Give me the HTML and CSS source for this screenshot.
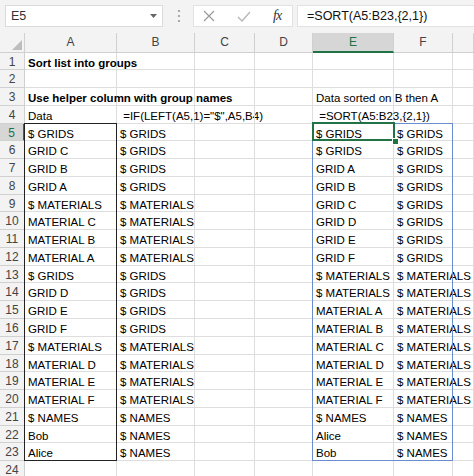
FILE: index.html
```html
<!doctype html>
<html lang="en">
<head>
  <meta charset="utf-8">
  <title>Sort list into groups</title>
  <link rel="stylesheet" href="styles.css">
</head>
<body>
  <div class="formula-bar">
    <div class="name-box">
      <span>E5</span>
      <svg class="caret" width="7" height="4" viewBox="0 0 7 4"><polygon points="0,0 7,0 3.5,4" fill="#666"/></svg>
    </div>
    <svg class="grip" width="4" height="14" viewBox="0 0 4 14">
      <circle cx="2" cy="2" r="1.1" fill="#999"/>
      <circle cx="2" cy="7" r="1.1" fill="#999"/>
      <circle cx="2" cy="12" r="1.1" fill="#999"/>
    </svg>
    <div class="fx-box">
      <svg width="12" height="12" viewBox="0 0 12 12"><path d="M1 1 L11 11 M11 1 L1 11" stroke="#9a9a9a" stroke-width="1.2" fill="none"/></svg>
      <svg width="14" height="11" viewBox="0 0 14 11"><path d="M1 6 L5 10 L13 1" stroke="#b5b5b5" stroke-width="1.3" fill="none"/></svg>
      <span class="fx">fx</span>
    </div>
    <div class="formula">=SORT(A5:B23,{2,1})</div>
  </div>

  <div class="sheet">
    <!-- column headers -->
    <div class="corner"><svg width="10" height="10" viewBox="0 0 10 10"><polygon points="10,0 10,10 0,10" fill="#bdbdbd"/></svg></div>
    <div class="ch">A</div><div class="ch">B</div><div class="ch">C</div><div class="ch">D</div>
    <div class="ch sel">E</div><div class="ch">F</div><div class="ch"></div>

    <div class="rh">1</div><div class="c b">Sort list into groups</div><div class="c"></div><div class="c"></div><div class="c"></div><div class="c"></div><div class="c"></div><div class="c"></div>
    <div class="rh">2</div><div class="c"></div><div class="c"></div><div class="c"></div><div class="c"></div><div class="c"></div><div class="c"></div><div class="c"></div>
    <div class="rh">3</div><div class="c b">Use helper column with group names</div><div class="c"></div><div class="c"></div><div class="c"></div><div class="c">Data sorted on B then A</div><div class="c"></div><div class="c"></div>
    <div class="rh">4</div><div class="c">Data</div><div class="c">&nbsp;=IF(LEFT(A5,1)="$",A5,B4)</div><div class="c"></div><div class="c"></div><div class="c">&nbsp;=SORT(A5:B23,{2,1})</div><div class="c"></div><div class="c"></div>
    <div class="rh sel">5</div><div class="c">$ GRIDS</div><div class="c">$ GRIDS</div><div class="c"></div><div class="c"></div><div class="c">$ GRIDS</div><div class="c">$ GRIDS</div><div class="c"></div>
    <div class="rh">6</div><div class="c">GRID C</div><div class="c">$ GRIDS</div><div class="c"></div><div class="c"></div><div class="c">$ GRIDS</div><div class="c">$ GRIDS</div><div class="c"></div>
    <div class="rh">7</div><div class="c">GRID B</div><div class="c">$ GRIDS</div><div class="c"></div><div class="c"></div><div class="c">GRID A</div><div class="c">$ GRIDS</div><div class="c"></div>
    <div class="rh">8</div><div class="c">GRID A</div><div class="c">$ GRIDS</div><div class="c"></div><div class="c"></div><div class="c">GRID B</div><div class="c">$ GRIDS</div><div class="c"></div>
    <div class="rh">9</div><div class="c">$ MATERIALS</div><div class="c">$ MATERIALS</div><div class="c"></div><div class="c"></div><div class="c">GRID C</div><div class="c">$ GRIDS</div><div class="c"></div>
    <div class="rh">10</div><div class="c">MATERIAL C</div><div class="c">$ MATERIALS</div><div class="c"></div><div class="c"></div><div class="c">GRID D</div><div class="c">$ GRIDS</div><div class="c"></div>
    <div class="rh">11</div><div class="c">MATERIAL B</div><div class="c">$ MATERIALS</div><div class="c"></div><div class="c"></div><div class="c">GRID E</div><div class="c">$ GRIDS</div><div class="c"></div>
    <div class="rh">12</div><div class="c">MATERIAL A</div><div class="c">$ MATERIALS</div><div class="c"></div><div class="c"></div><div class="c">GRID F</div><div class="c">$ GRIDS</div><div class="c"></div>
    <div class="rh">13</div><div class="c">$ GRIDS</div><div class="c">$ GRIDS</div><div class="c"></div><div class="c"></div><div class="c">$ MATERIALS</div><div class="c">$ MATERIALS</div><div class="c"></div>
    <div class="rh">14</div><div class="c">GRID D</div><div class="c">$ GRIDS</div><div class="c"></div><div class="c"></div><div class="c">$ MATERIALS</div><div class="c">$ MATERIALS</div><div class="c"></div>
    <div class="rh">15</div><div class="c">GRID E</div><div class="c">$ GRIDS</div><div class="c"></div><div class="c"></div><div class="c">MATERIAL A</div><div class="c">$ MATERIALS</div><div class="c"></div>
    <div class="rh">16</div><div class="c">GRID F</div><div class="c">$ GRIDS</div><div class="c"></div><div class="c"></div><div class="c">MATERIAL B</div><div class="c">$ MATERIALS</div><div class="c"></div>
    <div class="rh">17</div><div class="c">$ MATERIALS</div><div class="c">$ MATERIALS</div><div class="c"></div><div class="c"></div><div class="c">MATERIAL C</div><div class="c">$ MATERIALS</div><div class="c"></div>
    <div class="rh">18</div><div class="c">MATERIAL D</div><div class="c">$ MATERIALS</div><div class="c"></div><div class="c"></div><div class="c">MATERIAL D</div><div class="c">$ MATERIALS</div><div class="c"></div>
    <div class="rh">19</div><div class="c">MATERIAL E</div><div class="c">$ MATERIALS</div><div class="c"></div><div class="c"></div><div class="c">MATERIAL E</div><div class="c">$ MATERIALS</div><div class="c"></div>
    <div class="rh">20</div><div class="c">MATERIAL F</div><div class="c">$ MATERIALS</div><div class="c"></div><div class="c"></div><div class="c">MATERIAL F</div><div class="c">$ MATERIALS</div><div class="c"></div>
    <div class="rh">21</div><div class="c">$ NAMES</div><div class="c">$ NAMES</div><div class="c"></div><div class="c"></div><div class="c">$ NAMES</div><div class="c">$ NAMES</div><div class="c"></div>
    <div class="rh">22</div><div class="c">Bob</div><div class="c">$ NAMES</div><div class="c"></div><div class="c"></div><div class="c">Alice</div><div class="c">$ NAMES</div><div class="c"></div>
    <div class="rh">23</div><div class="c">Alice</div><div class="c">$ NAMES</div><div class="c"></div><div class="c"></div><div class="c">Bob</div><div class="c">$ NAMES</div><div class="c"></div>
    <div class="rh">24</div><div class="c"></div><div class="c"></div><div class="c"></div><div class="c"></div><div class="c"></div><div class="c"></div><div class="c"></div>

    <!-- range outlines drawn over the grid -->
    <div class="outline data-box"></div>
    <div class="outline spill-box"></div>
    <div class="outline active-cell"><span class="handle"></span></div>
  </div>
</body>
</html>
```

FILE: styles.css
```css
:root {
  --grid:      #dedede;
  --head-bg:   #f3f3f3;
  --head-line: #d0d0d0;
  --sel-bg:    #d6d6d6;
  --green:     #217346;
  --spill:     #6a8dd0;
  --row-h:     17.77px;
}
*, *::before, *::after { box-sizing: border-box; }
body {
  margin: 0;
  background: #fff;
  color: #000;
  font-family: "Liberation Sans", Arial, sans-serif;
  overflow: hidden;
}

/* ── formula bar ──────────────────────────────────────── */
.formula-bar {
  height: 33px;
  background: var(--head-bg);
  display: flex;
  align-items: flex-start;
  padding: 5px 0 0 5px;
}
.name-box {
  width: 158px;
  height: 22px;
  background: #fff;
  border: 1px solid #dcdcdc;
  display: flex;
  align-items: center;
  justify-content: space-between;
  padding: 0 5px 0 5px;
  font-size: 12.5px;
  color: #333;
}
.grip { margin: 4px 12px 0 14px; }
.fx-box {
  width: 100px;
  height: 22px;
  background: #fff;
  border: 1px solid #e2e2e2;
  display: flex;
  align-items: center;
  padding-left: 9px;
}
.fx-box svg:nth-child(1) { margin-right: 22px; }
.fx-box svg:nth-child(2) { margin-right: 22px; }
.fx {
  font-family: "Liberation Serif", serif;
  font-style: italic;
  font-size: 14px;
  color: #333;
  letter-spacing: -1px;
}
.formula {
  flex: 1;
  min-width: 0;
  height: 22px;
  margin-left: 4px;
  background: #fff;
  border: 1px solid #e2e2e2;
  border-right: none;
  padding: 3px 0 0 9px;
  font-size: 12.5px;
  color: #111;
  white-space: nowrap;
}

/* ── sheet grid ───────────────────────────────────────── */
.sheet {
  position: relative;
  display: grid;
  grid-template-columns: 25px 92px 78px 60px 58px 81px 59px 21px;
  grid-template-rows: 19.5px;
  grid-auto-rows: var(--row-h);
  font-size: 11.5px;
  width: 474px;
  overflow: hidden;
}
.sheet > div { border-right: 1px solid var(--grid); border-bottom: 1px solid var(--grid); }

.corner, .ch, .rh {
  background: var(--head-bg);
  color: #444;
  border-color: var(--head-line) !important;
}
.corner { display: flex; align-items: flex-end; justify-content: flex-end; padding: 0 2px 2px 0; }
.ch { text-align: center; font-size: 12px; line-height: 19px; }
.ch.sel { background: var(--sel-bg); color: var(--green); border-bottom: 2px solid var(--green) !important; }
.rh { text-align: center; font-size: 12px; line-height: 18px; }
.rh.sel { background: var(--sel-bg); color: var(--green); border-right: 2px solid var(--green) !important; }

.c {
  white-space: nowrap;
  overflow: visible;
  padding: 3px 0 0 3px;
  line-height: 14px;
}
.b { font-weight: 700; }

/* ── outlines ─────────────────────────────────────────── */
.outline { position: absolute; border: none !important; pointer-events: none; }
.data-box {
  left: 24px; top: 89.6px;
  width: 93px; height: 338.6px;
  box-shadow: inset 0 0 0 1px #222;
}
.spill-box {
  left: 312px; top: 89.6px;
  width: 141px; height: 338.6px;
  box-shadow: inset 0 0 0 1px var(--spill);
}
.active-cell {
  left: 312px; top: 89.1px;
  width: 82.5px; height: 19.3px;
  box-shadow: inset 0 0 0 2px var(--green);
}
.handle {
  position: absolute;
  right: -3px; bottom: -3px;
  width: 5px; height: 5px;
  background: var(--green);
  box-shadow: 0 0 0 1px #fff;
}
```
